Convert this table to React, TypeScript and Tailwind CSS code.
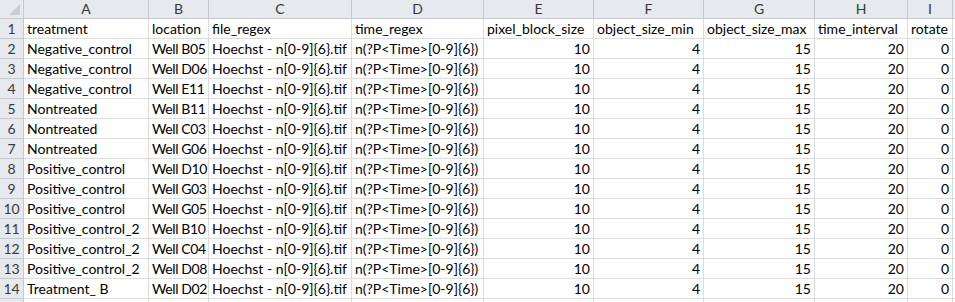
const cols = ['A', 'B', 'C', 'D', 'E', 'F', 'G', 'H', 'I', '']
const widths = 'grid-cols-[24px_125px_60px_143px_132px_110px_110px_111px_93px_45px_1fr]'

const header = ['treatment', 'location', 'file_regex', 'time_regex', 'pixel_block_size', 'object_size_min', 'object_size_max', 'time_interval', 'rotate']

const rows: [string, string][] = [
  ['Negative_control', 'Well B05'],
  ['Negative_control', 'Well D06'],
  ['Negative_control', 'Well E11'],
  ['Nontreated', 'Well B11'],
  ['Nontreated', 'Well C03'],
  ['Nontreated', 'Well G06'],
  ['Positive_control', 'Well D10'],
  ['Positive_control', 'Well G03'],
  ['Positive_control', 'Well G05'],
  ['Positive_control_2', 'Well B10'],
  ['Positive_control_2', 'Well C04'],
  ['Positive_control_2', 'Well D08'],
  ['Treatment_ B', 'Well D02'],
]

function Cell({ children, right, tight }: { children?: React.ReactNode; right?: boolean; tight?: boolean }) {
  return (
    <div
      className={`h-5 border-r border-b border-[#dadcdd] px-[3px] leading-[20px] whitespace-nowrap overflow-hidden ${right ? 'text-right' : ''} ${tight ? 'tracking-[-0.4px]' : ''}`}
    >
      {children}
    </div>
  )
}

function RowHead({ n }: { n?: number }) {
  return (
    <div className="h-5 border-r border-b border-[#c5c9cf] bg-[#e6e9ed] text-center leading-[20px] text-[#3a3a3a]">
      {n}
    </div>
  )
}

export default function App() {
  const data: string[][] = [
    header,
    ...rows.map(([t, l]) => [t, l, 'Hoechst - n[0-9]{6}.tif', 'n(?P<Time>[0-9]{6})', '10', '4', '15', '20', '0']),
  ]

  return (
    <div className="w-[955px] h-[302px] overflow-hidden bg-white text-[14px] text-black" style={{ fontFamily: 'Lato, "Open Sans", sans-serif' }}>
      <div className={`grid ${widths}`}>
        {/* corner */}
        <div className="relative h-[19px] border-r border-b border-[#c5c9cf] bg-[#e6e9ed]">
          <div className="absolute right-[3px] bottom-[3px] w-0 h-0 border-l-[11px] border-l-transparent border-b-[11px] border-b-[#c9ccd0]" />
        </div>
        {cols.map((c, i) => (
          <div key={i} className="h-[19px] border-r border-b border-[#c5c9cf] bg-[#e6e9ed] text-center leading-[18px] text-[#3a3a3a]">
            {c}
          </div>
        ))}

        {data.map((r, ri) => (
          <div key={ri} className="contents">
            <RowHead n={ri + 1} />
            {r.map((v, ci) => (
              <Cell key={ci} right={ri > 0 && ci >= 4} tight={ci === 1 && ri > 0}>
                {v}
              </Cell>
            ))}
            <Cell />
          </div>
        ))}

        {/* partially visible row 15 */}
        <RowHead />
        {cols.map((_, i) => (
          <Cell key={i} />
        ))}
      </div>
    </div>
  )
}
